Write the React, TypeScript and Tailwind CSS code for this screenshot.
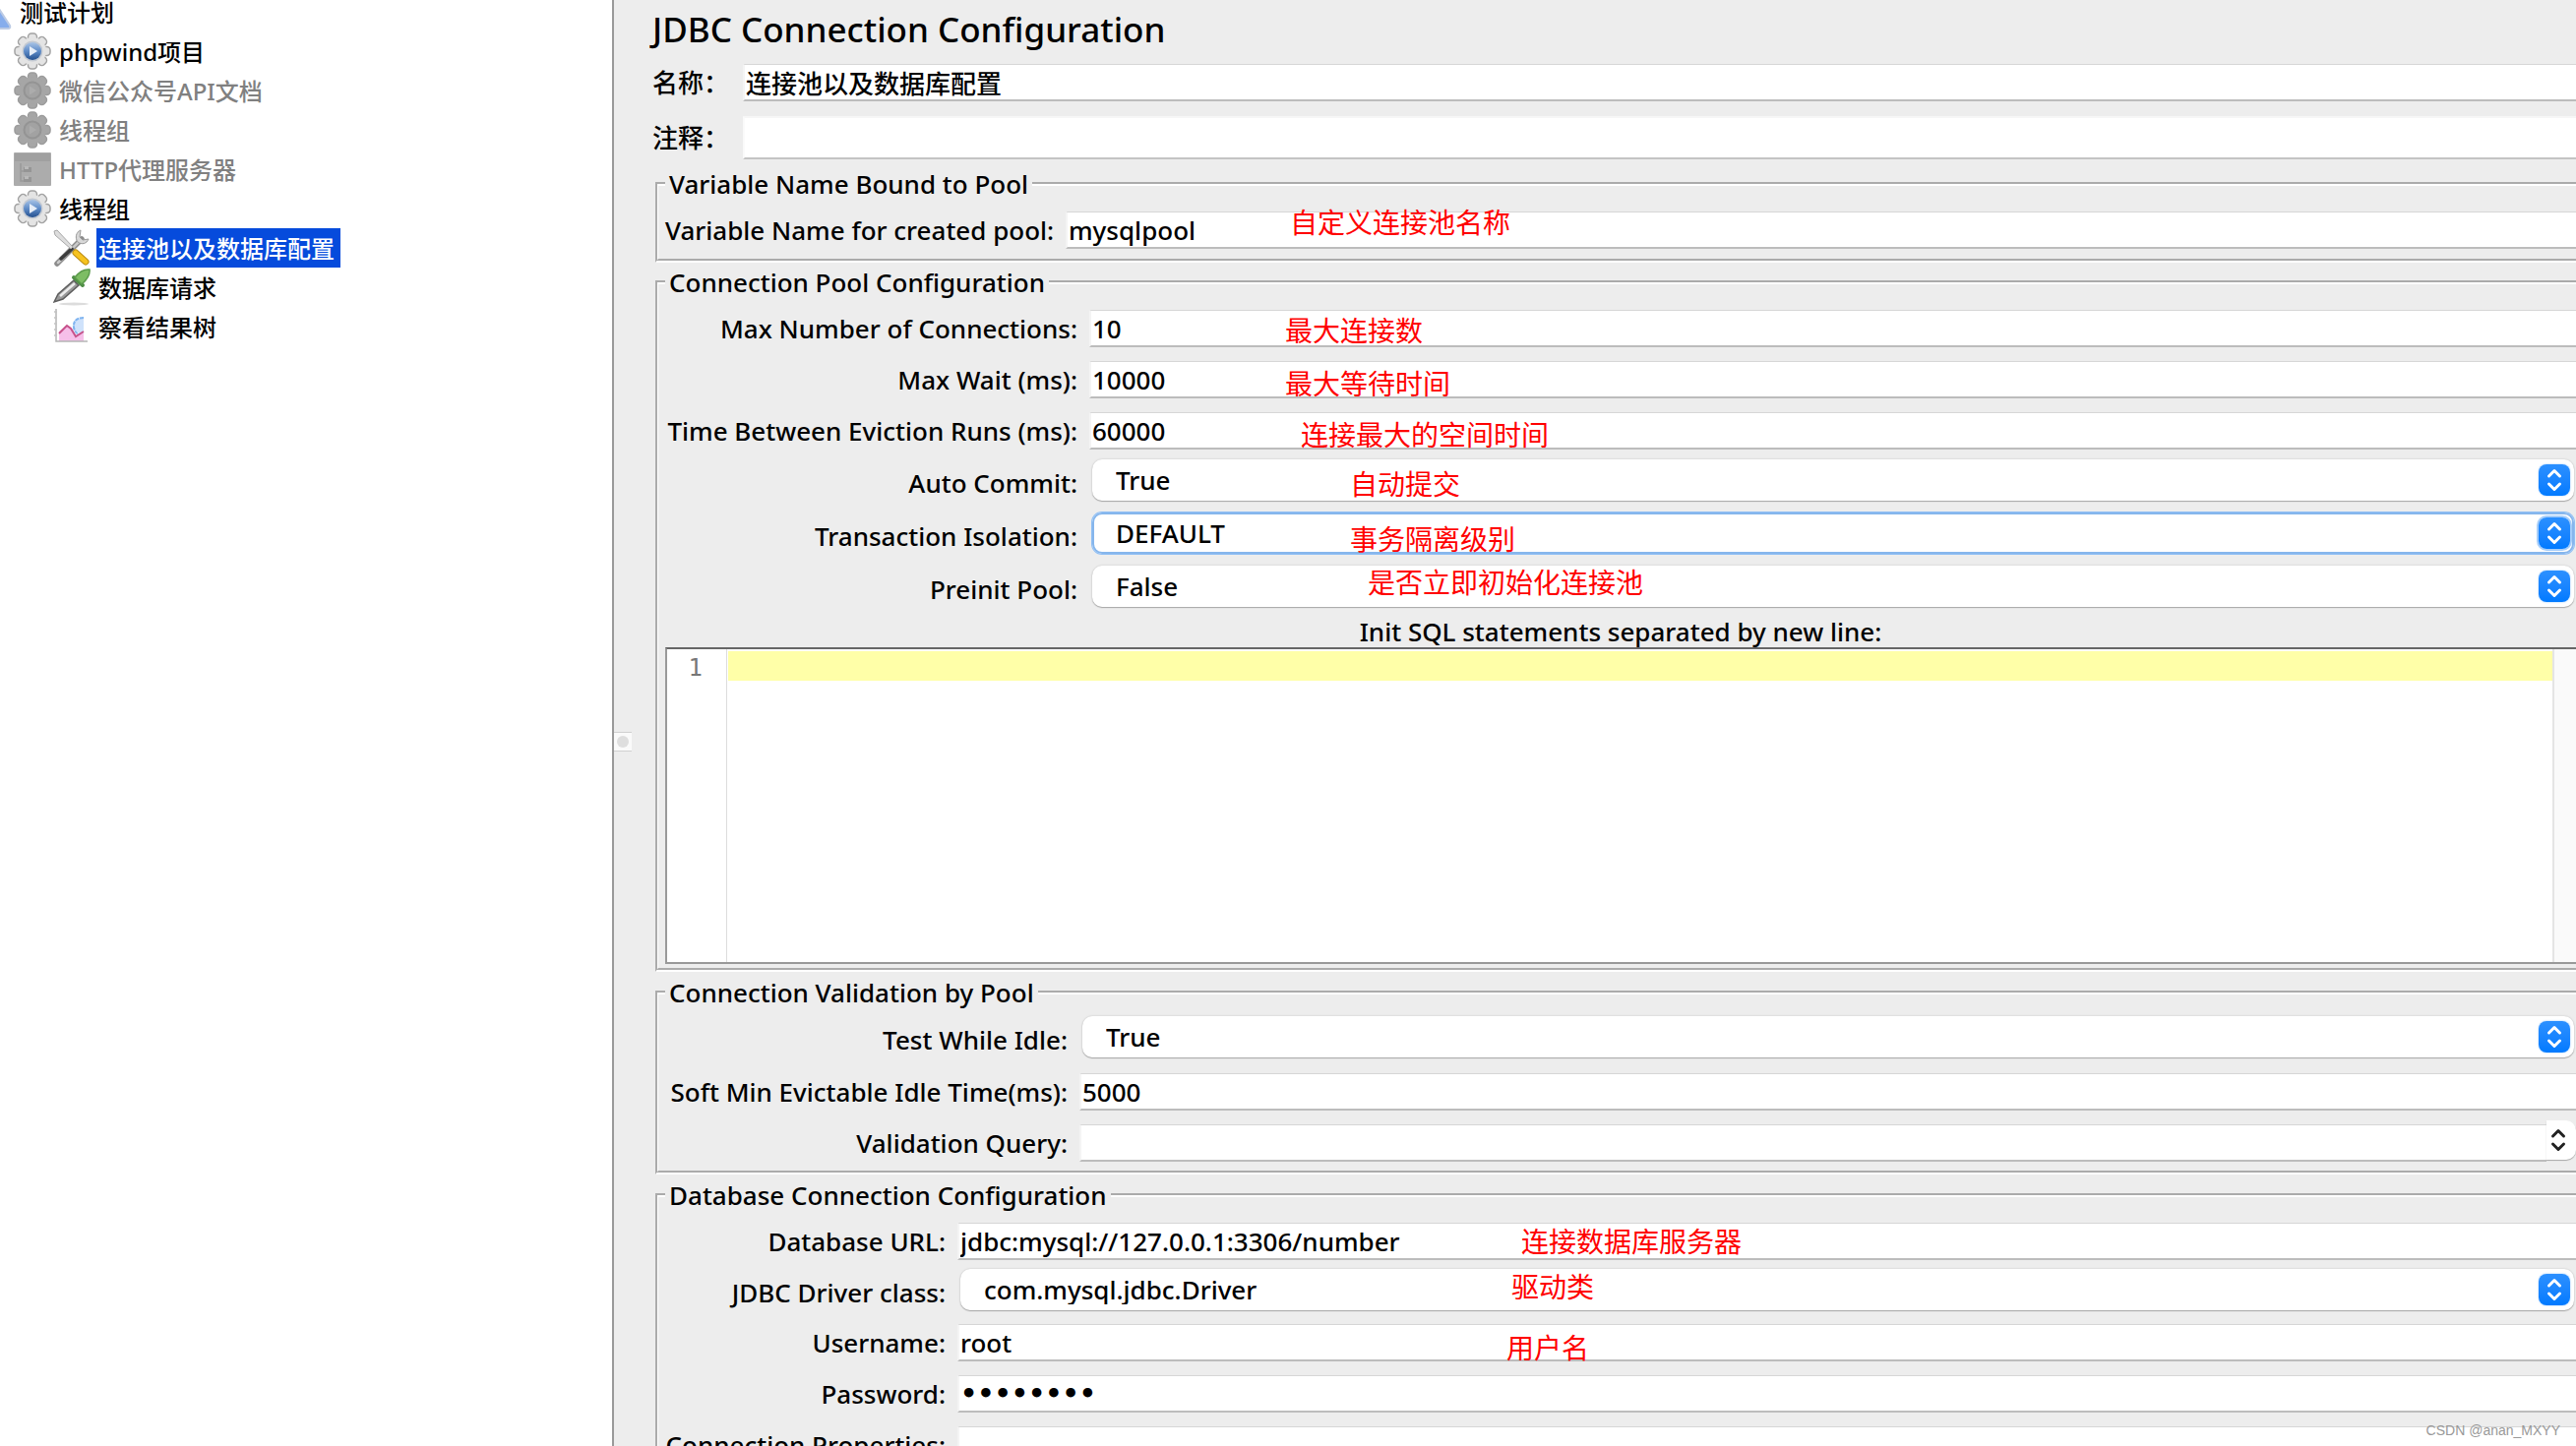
import type { ReactNode } from "react";
import clsx from "clsx";

type IconName = "plan" | "gear" | "gearOff" | "server" | "tools" | "dropper" | "chart";

type TreeItem = {
  label: string;
  icon: IconName;
  level: 0 | 1 | 2;
  disabled?: boolean;
  selected?: boolean;
};

const tree: TreeItem[] = [
  { label: "测试计划", icon: "plan", level: 0 },
  { label: "phpwind项目", icon: "gear", level: 1 },
  { label: "微信公众号API文档", icon: "gearOff", level: 1, disabled: true },
  { label: "线程组", icon: "gearOff", level: 1, disabled: true },
  { label: "HTTP代理服务器", icon: "server", level: 1, disabled: true },
  { label: "线程组", icon: "gear", level: 1 },
  { label: "连接池以及数据库配置", icon: "tools", level: 2, selected: true },
  { label: "数据库请求", icon: "dropper", level: 2 },
  { label: "察看结果树", icon: "chart", level: 2 },
];

const indent = ["-ml-[26px]", "ml-[14px]", "ml-[54px]"];

function Gear({ off }: { off?: boolean }) {
  const body = off ? "#a6a6a6" : "#e4e4e4";
  const edge = off ? "#9c9c9c" : "#a3a3a3";
  return (
    <>
      <g fill={body} stroke={edge} strokeWidth="1.5">
        {[0, 45, 90, 135].map((a) => (
          <rect key={a} x="14.5" y="1" width="9" height="36" rx="3.5" transform={`rotate(${a} 19 19)`} />
        ))}
      </g>
      <circle cx="19" cy="19" r="14" fill={body} />
      {off ? (
        <>
          <circle cx="19" cy="19" r="8.5" fill="#a2a2a2" stroke="#949494" strokeWidth="2" />
          <path d="M16 14.5l7 4.5-7 4.5z" fill="#acacac" />
        </>
      ) : (
        <>
          <circle cx="19" cy="19" r="10.5" fill="#c3c9d2" />
          <circle cx="19" cy="19" r="9" fill="url(#gearBlue)" />
          <path d="M16 14l8 5-8 5z" fill="#e6edf7" />
        </>
      )}
    </>
  );
}

function TreeIcon({ name }: { name: IconName }) {
  return (
    <svg viewBox="0 0 38 38" className="size-[38px] shrink-0" aria-hidden="true">
      <defs>
        <linearGradient id="gearBlue" x1="0" y1="0" x2="0" y2="1">
          <stop offset="0" stopColor="#a9c4e6" />
          <stop offset="0.5" stopColor="#5f8cc8" />
          <stop offset="1" stopColor="#24508f" />
        </linearGradient>
      </defs>
      {name === "plan" && (
        <path d="M15 2h8v11l13 20q1 3-2 3H4q-3 0-2-3l13-20z" fill="#86adec" stroke="#bccbe4" strokeWidth="2" />
      )}
      {name === "gear" && <Gear />}
      {name === "gearOff" && <Gear off />}
      {name === "server" && (
        <>
          <rect x="0" y="2" width="38" height="34" rx="1" fill="#acacac" />
          <rect x="1" y="3" width="36" height="8" fill="#a0a0a0" />
          <path d="M7 13v18h5M7 21h5" stroke="#999" strokeWidth="1.5" fill="none" />
          <path d="M10 17h8v5h-8zM10 27h8v5h-8z" fill="#959595" />
          <path d="M11 16h4v3h-4zM11 26h4v3h-4z" fill="#b9b9b9" />
        </>
      )}
      {name === "tools" && (
        <>
          <path d="M4 35L29 10" stroke="#8c8c8c" strokeWidth="5.5" strokeLinecap="round" />
          <path d="M5 34L28 11" stroke="#c9c9c9" strokeWidth="2.5" strokeLinecap="round" />
          <path d="M8 30L19 20" stroke="#3c3c3c" strokeWidth="3.5" strokeLinecap="round" />
          <path d="M28 1c-5 2-6 8-3 12 4 3 9 2 11-3l-6 1-3-3z" fill="#d8d8d8" stroke="#999" strokeWidth="1" />
          <path d="M1 2l3-1 16 17-2 2L2 6z" fill="#ddd" stroke="#a8a8a8" strokeWidth="1" />
          <path d="M23 24L33 33" stroke="#b98a12" strokeWidth="7" strokeLinecap="round" />
          <path d="M23 24L33 33" stroke="#f6c21f" strokeWidth="5" strokeLinecap="round" />
        </>
      )}
      {name === "dropper" && (
        <>
          <ellipse cx="21" cy="36" rx="15" ry="1.5" fill="#dcdcdc" />
          <path d="M1 34L5 26 21 12l5 5L10 31z" fill="#9a9a9a" stroke="#5e5e5e" strokeWidth="1.5" />
          <path d="M7 28L22 15" stroke="#ececec" strokeWidth="2.5" />
          <path d="M21 9l9 8" stroke="#4f8d46" strokeWidth="4" strokeLinecap="round" />
          <path d="M22 9Q29 0 37 1q1 7-8 15z" fill="#7dbd64" stroke="#5a9a4a" strokeWidth="1.5" />
        </>
      )}
      {name === "chart" && (
        <>
          <path d="M6 34V24l7-6 5 3 5 7 8-4v10z" fill="#f6bfe9" />
          <path d="M31 10q-11 0-11 9 0 7 11 7z" fill="#cfe2fb" />
          <path d="M31 10q-11 0-10 10 1 5 5 7" stroke="#7fb4f0" strokeWidth="2" fill="none" strokeDasharray="4 1" />
          <path d="M6 26l8-8 4 3 5 8 8-5" stroke="#c7528b" strokeWidth="2" fill="none" />
          <path d="M3 1v33h32" stroke="#b5b5b5" strokeWidth="1.5" fill="none" />
          <path d="M1 4h3M1 10h3M1 16h3M1 22h3M1 28h3" stroke="#c4c4c4" strokeWidth="1.5" />
        </>
      )}
    </svg>
  );
}

function Chevrons({ className }: { className?: string }) {
  return (
    <svg viewBox="0 0 32 32" className={clsx("size-8", className)} fill="none" stroke="currentColor" strokeWidth="3" strokeLinecap="round" strokeLinejoin="round" aria-hidden="true">
      <path d="M10.500 12L16 6.500l5.500 5.500M10.500 20L16 25.500 21.500 20" />
    </svg>
  );
}

const fieldClass =
  "h-[38px] w-full min-w-0 rounded-none border-t border-b-2 border-l-2 border-t-[#d6d6d6] border-b-[#bcbcbc] border-l-[#f4f4f4] bg-white pl-px outline-none";

function TextField({ id, value, type = "text" }: { id: string; value: string; type?: string }) {
  return (
    <input
      id={id}
      type={type}
      defaultValue={value}
      className={clsx(fieldClass, type === "password" && "font-['DejaVu_Sans',sans-serif] text-[27px] font-bold")}
    />
  );
}

function SelectField({ id, value, active }: { id: string; value: string; active?: boolean }) {
  return (
    <div className="relative mr-0.5 ml-[3px]">
      <select
        id={id}
        defaultValue={value}
        className={clsx(
          "block h-[42px] w-full appearance-none rounded-[10px] bg-white pl-6 leading-[30px] outline-none",
          active
            ? "shadow-[inset_0_0_0_2px_#86b6ec,0_0_0_1px_#8fbff5]"
            : "shadow-[0_1px_1px_#a8a8a8,0_0_2px_#bdbdbd]"
        )}
      >
        <option>{value}</option>
      </select>
      <span
        className={clsx(
          "pointer-events-none absolute top-[5px] right-1 rounded-lg bg-linear-to-b from-[#2b90ff] to-[#007aff] text-white",
          active ? "shadow-[0_0_0_2px_#a5cdfa]" : "shadow-[0_0_2px_#8fc3fb]"
        )}
      >
        <Chevrons />
      </span>
    </div>
  );
}

function Row({
  id,
  label,
  labelClass,
  rowClass = "h-[52px] py-[7px]",
  note,
  noteClass,
  children,
}: {
  id: string;
  label: string;
  labelClass: string;
  rowClass?: string;
  note?: string;
  noteClass?: string;
  children: ReactNode;
}) {
  return (
    <div className="flex items-center gap-3">
      <label htmlFor={id} className={clsx("shrink-0 text-right whitespace-nowrap", labelClass)}>
        {label}
      </label>
      <div className={clsx("relative min-w-0 flex-1", rowClass)}>
        {children}
        {note && (
          <span className={clsx("pointer-events-none absolute text-[28px] leading-7 font-normal whitespace-nowrap text-[#f00]", noteClass)}>
            {note}
          </span>
        )}
      </div>
    </div>
  );
}

function Group({ title, className, children }: { title: string; className?: string; children: ReactNode }) {
  return (
    <fieldset
      className={clsx(
        "ml-[3px] min-w-0 border-y-4 border-l-[3px] border-white pl-[7px] [border-style:groove] border-r-0",
        className
      )}
    >
      <legend className="px-1 leading-[30px]">{title}</legend>
      <div className="pt-1.5">{children}</div>
    </fieldset>
  );
}

function Sidebar() {
  return (
    <nav className="w-[622px] shrink-0 overflow-hidden bg-white">
      <ul className="-mt-2 text-[24px]">
        {tree.map((item, i) => (
          <li key={i} className="flex h-10 items-center gap-1.5">
            <span className={clsx("shrink-0", indent[item.level])}>
              <TreeIcon name={item.icon} />
            </span>
            <button
              type="button"
              className={clsx(
                "h-10 pt-0.5 pr-1.5 pl-0.5 whitespace-nowrap",
                item.selected && "bg-[#064bdc] text-white",
                item.disabled && "text-[#808080]"
              )}
            >
              {item.label}
            </button>
          </li>
        ))}
      </ul>
    </nav>
  );
}

export default function App() {
  const selectRow = "h-[54px] pt-[3px]";
  return (
    <div className="relative flex h-screen overflow-hidden bg-[#ededed] font-['Noto_Sans','Noto_Sans_CJK_SC',sans-serif] text-[26px] leading-[30px] font-medium text-black">
      <Sidebar />

      {/* splitter */}
      <div className="w-[41px] shrink-0 border-l-2 border-[#999] pt-[744px]">
        <div className="flex h-5 w-[18px] items-center justify-center border-y border-[#d0d0d0] bg-[#fafafa]">
          <span className="size-3 rounded-full bg-[#dedede]" />
        </div>
      </div>

      <main className="min-w-0 flex-1">
        <h1 className="h-[58px] text-[35px] leading-[59px]">JDBC Connection Configuration</h1>
        <div className="flex h-[52px] items-center">
          <label htmlFor="name" className="w-[92px] shrink-0">名称：</label>
          <TextField id="name" value="连接池以及数据库配置" />
        </div>
        <div className="flex h-[60px] items-center">
          <label htmlFor="comment" className="w-[92px] shrink-0">注释：</label>
          <input id="comment" className="h-11 w-full border-2 border-r-0 border-t-[#f6f6f6] border-b-[#c4c4c4] border-l-[#fafafa] bg-white outline-none" />
        </div>

        <Group title="Variable Name Bound to Pool" className="mt-0.5 pb-[3px]">
          <Row id="pool" label="Variable Name for created pool:" labelClass="w-[395px]" note="自定义连接池名称" noteClass="top-1 left-[228px]">
            <TextField id="pool" value="mysqlpool" />
          </Row>
        </Group>

        <Group title="Connection Pool Configuration" className="mt-[5px] pb-1">
          <Row id="maxConn" label="Max Number of Connections:" labelClass="w-[419px]" note="最大连接数" noteClass="top-3.5 left-[199px]">
            <TextField id="maxConn" value="10" />
          </Row>
          <Row id="maxWait" label="Max Wait (ms):" labelClass="w-[419px]" note="最大等待时间" noteClass="top-4 left-[199px]">
            <TextField id="maxWait" value="10000" />
          </Row>
          <Row id="eviction" label="Time Between Eviction Runs (ms):" labelClass="w-[419px]" note="连接最大的空间时间" noteClass="top-4 left-[215px]">
            <TextField id="eviction" value="60000" />
          </Row>
          <Row id="autoCommit" label="Auto Commit:" labelClass="w-[419px]" rowClass={selectRow} note="自动提交" noteClass="top-3.5 left-[265px]">
            <SelectField id="autoCommit" value="True" />
          </Row>
          <Row id="isolation" label="Transaction Isolation:" labelClass="w-[419px]" rowClass={selectRow} note="事务隔离级别" noteClass="top-4 left-[265px]">
            <SelectField id="isolation" value="DEFAULT" active />
          </Row>
          <Row id="preinit" label="Preinit Pool:" labelClass="w-[419px]" rowClass={selectRow} note="是否立即初始化连接池" noteClass="top-1.5 left-[283px]">
            <SelectField id="preinit" value="False" />
          </Row>
          <label htmlFor="initSql" className="block h-8 text-center leading-8">
            Init SQL statements separated by new line:
          </label>
          <div className="flex h-[322px] border-y-2 border-l-2 border-t-[#666] border-b-[#999] border-l-[#999] bg-white">
            <div className="w-[61px] shrink-0 border-r border-[#ddd] pt-1 pr-6 text-right font-['DejaVu_Sans_Mono',monospace] text-[24px] font-normal text-[#777]">
              1
            </div>
            <textarea
              id="initSql"
              className="mt-0.5 ml-px min-w-0 flex-1 resize-none bg-[linear-gradient(#ffffa8_30px,#fff_30px)] outline-none"
            />
            <div className="w-6 shrink-0 border-l-2 border-[#e5e5e5] bg-[#fafafa]" />
          </div>
        </Group>

        <Group title="Connection Validation by Pool" className="mt-1.5 pb-0.5">
          <Row id="testIdle" label="Test While Idle:" labelClass="w-[409px]" rowClass={selectRow}>
            <SelectField id="testIdle" value="True" />
          </Row>
          <Row id="softMin" label="Soft Min Evictable Idle Time(ms):" labelClass="w-[409px]">
            <TextField id="softMin" value="5000" />
          </Row>
          <Row id="query" label="Validation Query:" labelClass="w-[409px]" rowClass="flex h-[52px] py-[7px]">
            <TextField id="query" value="" />
            <button
              type="button"
              aria-label="Show queries"
              className="-mt-1 flex h-10 w-[30px] shrink-0 items-center rounded-r-[10px] bg-white text-[#222] shadow-[0_1px_1px_#a8a8a8]"
            >
              <Chevrons className="-ml-1 shrink-0" />
            </button>
          </Row>
        </Group>

        <Group title="Database Connection Configuration" className="mt-1.5">
          <Row id="url" label="Database URL:" labelClass="w-[285px]" note="连接数据库服务器" noteClass="top-3 left-[573px]">
            <TextField id="url" value="jdbc:mysql://127.0.0.1:3306/number" />
          </Row>
          <Row id="driver" label="JDBC Driver class:" labelClass="w-[285px]" rowClass="h-[51px] pt-[2px]" note="驱动类" noteClass="top-1.5 left-[563px]">
            <SelectField id="driver" value="com.mysql.jdbc.Driver" />
          </Row>
          <Row id="user" label="Username:" labelClass="w-[285px]" note="用户名" noteClass="top-[17px] left-[558px]">
            <TextField id="user" value="root" />
          </Row>
          <Row id="password" label="Password:" labelClass="w-[285px]">
            <TextField id="password" value="12345678" type="password" />
          </Row>
          <Row id="props" label="Connection Properties:" labelClass="w-[285px]">
            <TextField id="props" value="" />
          </Row>
        </Group>
      </main>

      <span className="absolute right-4 bottom-1 font-['Liberation_Sans',Arial,sans-serif] text-[14px] leading-6 font-normal text-[#999]">
        CSDN @anan_MXYY
      </span>
    </div>
  );
}
